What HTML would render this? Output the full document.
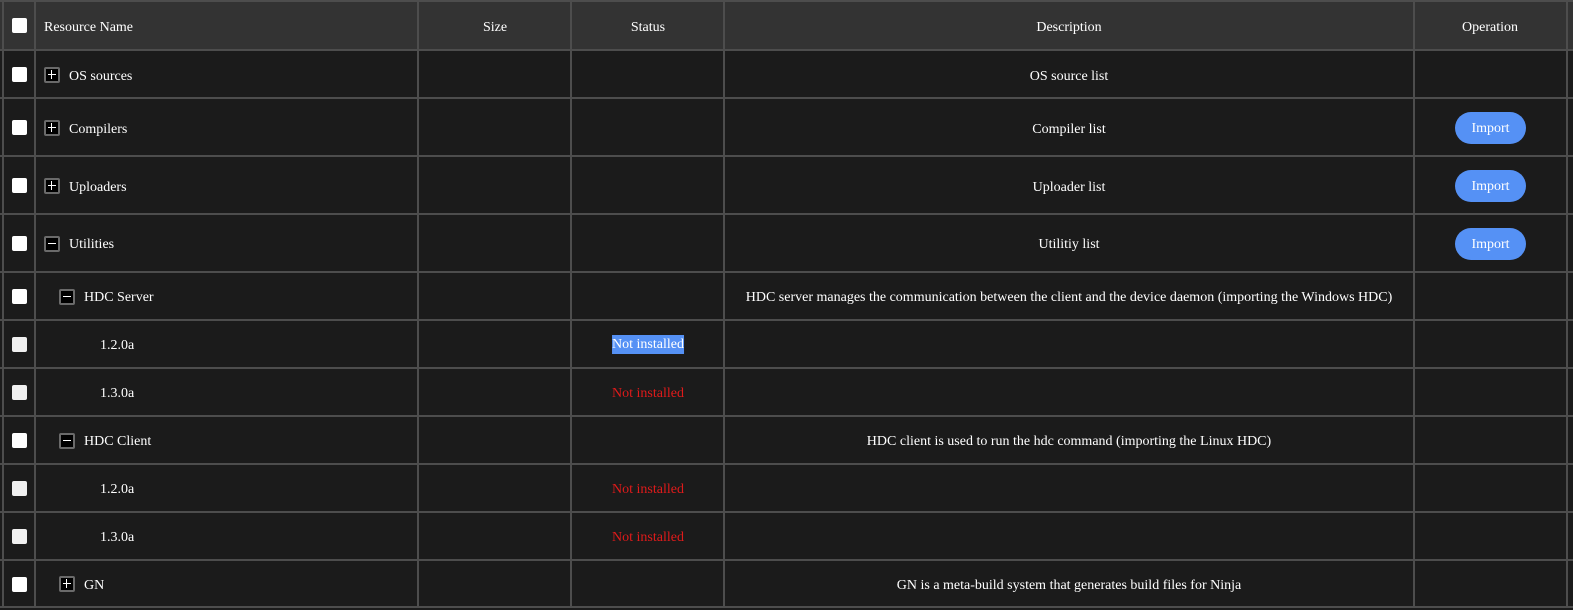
<!DOCTYPE html>
<html><head><meta charset="utf-8"><style>
body{margin:0;width:1573px;height:610px;background:#1b1b1b;overflow:hidden;font-family:"Liberation Serif",serif;font-size:14px;color:#fff;position:relative}
.l{position:absolute;background:#4d4d4d}
.t{position:absolute;white-space:nowrap;line-height:16px;margin-top:2px}
.c{position:absolute;transform:translateX(-50%);white-space:nowrap;line-height:16px;margin-top:2px}
.cb{position:absolute;left:12px;width:15px;height:15px;background:#fff;border-radius:2px}
.cb.g{background:#f0f0f0}
.ex{position:absolute;width:12px;height:12px;background:#000;border:2px solid #6a6a6a;border-radius:2px;box-sizing:content-box}
.ex:before{content:"";position:absolute;left:2px;top:5px;width:8px;height:1px;background:#fff}
.ex.p:after{content:"";position:absolute;left:5px;top:1px;width:1px;height:9px;background:#fff}
.btn{position:absolute;left:1455px;width:71px;height:32px;border-radius:16px;background:#5591f5;color:#fff;text-align:center;line-height:34px}
.red{color:#e01b1b}
</style></head><body>
<div style="position:absolute;left:0;top:0;width:1573px;height:50px;background:#333"></div>
<div class="l" style="left:2px;top:0;width:2px;height:608px"></div>
<div class="l" style="left:34px;top:0;width:2px;height:608px"></div>
<div class="l" style="left:417px;top:0;width:2px;height:608px"></div>
<div class="l" style="left:570px;top:0;width:2px;height:608px"></div>
<div class="l" style="left:723px;top:0;width:2px;height:608px"></div>
<div class="l" style="left:1413px;top:0;width:2px;height:608px"></div>
<div class="l" style="left:1566px;top:0;width:2px;height:608px"></div>
<div class="l" style="left:0;top:0;width:1573px;height:2px"></div>
<div class="l" style="left:0;top:49px;width:1573px;height:2px"></div>
<div class="l" style="left:0;top:97px;width:1573px;height:2px"></div>
<div class="l" style="left:0;top:155px;width:1573px;height:2px"></div>
<div class="l" style="left:0;top:213px;width:1573px;height:2px"></div>
<div class="l" style="left:0;top:271px;width:1573px;height:2px"></div>
<div class="l" style="left:0;top:319px;width:1573px;height:2px"></div>
<div class="l" style="left:0;top:367px;width:1573px;height:2px"></div>
<div class="l" style="left:0;top:415px;width:1573px;height:2px"></div>
<div class="l" style="left:0;top:463px;width:1573px;height:2px"></div>
<div class="l" style="left:0;top:511px;width:1573px;height:2px"></div>
<div class="l" style="left:0;top:559px;width:1573px;height:2px"></div>
<div class="l" style="left:0;top:606px;width:1573px;height:2px"></div>

<div class="cb" style="top:18px"></div>
<div class="t" style="left:44px;top:18px">Resource Name</div>
<div class="c" style="left:495px;top:18px">Size</div>
<div class="c" style="left:648px;top:18px">Status</div>
<div class="c" style="left:1069px;top:18px">Description</div>
<div class="c" style="left:1490px;top:18px">Operation</div>

<div class="cb" style="top:67px"></div>
<div class="ex p" style="left:44px;top:67px"></div>
<div class="t" style="left:69px;top:67px">OS sources</div>
<div class="c" style="left:1069px;top:67px">OS source list</div>

<div class="cb" style="top:120px"></div>
<div class="ex p" style="left:44px;top:120px"></div>
<div class="t" style="left:69px;top:120px">Compilers</div>
<div class="c" style="left:1069px;top:120px">Compiler list</div>
<div class="btn" style="top:112px">Import</div>

<div class="cb" style="top:178px"></div>
<div class="ex p" style="left:44px;top:178px"></div>
<div class="t" style="left:69px;top:178px">Uploaders</div>
<div class="c" style="left:1069px;top:178px">Uploader list</div>
<div class="btn" style="top:170px">Import</div>

<div class="cb" style="top:236px"></div>
<div class="ex" style="left:44px;top:236px"></div>
<div class="t" style="left:69px;top:235px">Utilities</div>
<div class="c" style="left:1069px;top:235px">Utilitiy list</div>
<div class="btn" style="top:228px">Import</div>

<div class="cb" style="top:289px"></div>
<div class="ex" style="left:59px;top:289px"></div>
<div class="t" style="left:84px;top:288px">HDC Server</div>
<div class="c" style="left:1069px;top:288px">HDC server manages the communication between the client and the device daemon (importing the Windows HDC)</div>

<div class="cb g" style="top:337px"></div>
<div class="t" style="left:100px;top:336px">1.2.0a</div>
<div class="c" style="left:648px;top:333px;background:#5591f5;line-height:19px">Not installed</div>

<div class="cb g" style="top:385px"></div>
<div class="t" style="left:100px;top:384px">1.3.0a</div>
<div class="c red" style="left:648px;top:384px">Not installed</div>

<div class="cb" style="top:433px"></div>
<div class="ex" style="left:59px;top:433px"></div>
<div class="t" style="left:84px;top:432px">HDC Client</div>
<div class="c" style="left:1069px;top:432px">HDC client is used to run the hdc command (importing the Linux HDC)</div>

<div class="cb g" style="top:481px"></div>
<div class="t" style="left:100px;top:480px">1.2.0a</div>
<div class="c red" style="left:648px;top:480px">Not installed</div>

<div class="cb g" style="top:529px"></div>
<div class="t" style="left:100px;top:528px">1.3.0a</div>
<div class="c red" style="left:648px;top:528px">Not installed</div>

<div class="cb" style="top:577px"></div>
<div class="ex p" style="left:59px;top:576px"></div>
<div class="t" style="left:84px;top:576px">GN</div>
<div class="c" style="left:1069px;top:576px">GN is a meta-build system that generates build files for Ninja</div>
</body></html>
